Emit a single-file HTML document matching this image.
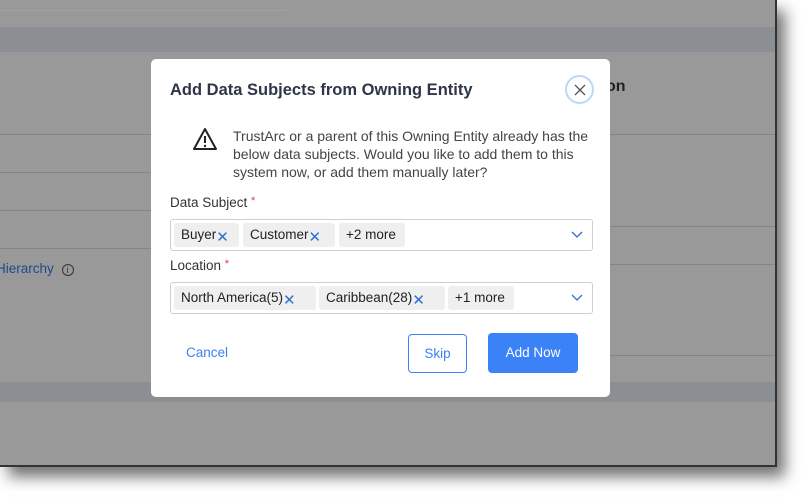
<!DOCTYPE html>
<html><head><style>
*{box-sizing:border-box;margin:0;padding:0}
body{width:809px;height:500px;background:#fff;position:relative;overflow:hidden;font-family:"Liberation Sans",sans-serif}
.win{position:absolute;left:0;top:0;width:777px;height:467px;background:#999;border-right:2px solid #333;border-bottom:2px solid #333;box-shadow:8px 10px 14px rgba(0,0,0,.55)}
.band{position:absolute;left:0;width:775px;background:#8b8e92}
.ln{position:absolute;height:1px;background:#7f858e}
.modal{position:absolute;left:151px;top:59px;width:459px;height:338px;background:#fff;border-radius:5px}
.t{position:absolute;white-space:nowrap}
.inp{position:absolute;left:19px;width:423px;height:32px;border:1px solid #cfcfcf;border-radius:3px}
.chip{position:absolute;top:3px;height:24px;background:#efefef;border-radius:3px;font-size:13.5px;color:#222;line-height:24px;padding-left:7px;white-space:nowrap}
.x{color:#2f6fd6;font-size:15px;position:relative;top:3px}
.lab{font-size:13.5px;color:#333}
.req{color:#e0374a;font-size:11px;vertical-align:top}
</style></head><body>
<div class="win">
<div class="band" style="top:27px;height:25px"></div>
<div class="ln" style="top:10px;left:0;width:287px;background:#a3a3a3"></div>
<div class="ln" style="top:134px;left:0;width:775px"></div>
<div class="ln" style="top:172px;left:0;width:160px"></div>
<div class="ln" style="top:210px;left:0;width:160px"></div>
<div class="ln" style="top:248px;left:0;width:160px"></div>
<div class="ln" style="top:226px;left:600px;width:175px"></div>
<div class="ln" style="top:264px;left:600px;width:175px"></div>
<div class="ln" style="top:355px;left:600px;width:175px"></div>
<div class="band" style="top:382px;height:20px"></div>
<div class="t" style="left:-4px;top:261px;font-size:13.5px;color:#1f4a8a">Hierarchy <span style="display:inline-block;width:12px;height:12px;border:1px solid #333;border-radius:50%;font-size:9px;text-align:center;line-height:10px;color:#333;margin-left:4px">i</span></div>
<div class="t" style="left:606px;top:78px;font-size:16px;font-weight:bold;color:#222">on</div>
</div>
<div class="modal">
<div class="t" style="left:19px;top:22px;font-size:16.5px;font-weight:bold;color:#2d3748">Add Data Subjects from Owning Entity</div>
<div style="position:absolute;left:414px;top:16px;width:29px;height:29px;border:2px solid #bcd8f7;border-radius:50%"></div>
<svg style="position:absolute;left:422px;top:24px" width="14" height="14"><path d="M2 2L12 12M12 2L2 12" stroke="#555" stroke-width="1.3"/></svg>
<svg style="position:absolute;left:41px;top:68px" width="26" height="25"><path d="M13 2L24 22H2Z" fill="none" stroke="#222" stroke-width="2" stroke-linejoin="round"/><path d="M13 9V16" stroke="#222" stroke-width="2"/><circle cx="13" cy="19" r="1.2" fill="#222"/></svg>
<div class="t" style="left:82px;top:68px;font-size:14px;color:#444;line-height:18px">TrustArc or a parent of this Owning Entity already has the<br>below data subjects. Would you like to add them to this<br>system now, or add them manually later?</div>
<div class="t lab" style="left:19px;top:136px">Data Subject <span class="req">*</span></div>
<div class="inp" style="top:160px">
<div class="chip" style="left:3px;width:65px">Buyer<span class="x">✕</span></div>
<div class="chip" style="left:72px;width:92px">Customer<span class="x">✕</span></div>
<div class="chip" style="left:168px;width:66px">+2 more</div>
<svg style="position:absolute;right:9px;top:11px" width="12" height="8"><path d="M1 1L6 6L11 1" fill="none" stroke="#2f6fd6" stroke-width="1.3"/></svg>
</div>
<div class="t lab" style="left:19px;top:199px">Location <span class="req">*</span></div>
<div class="inp" style="top:223px">
<div class="chip" style="left:3px;width:142px">North America(5)<span class="x">✕</span></div>
<div class="chip" style="left:148px;width:126px">Caribbean(28)<span class="x">✕</span></div>
<div class="chip" style="left:277px;width:66px">+1 more</div>
<svg style="position:absolute;right:9px;top:11px" width="12" height="8"><path d="M1 1L6 6L11 1" fill="none" stroke="#2f6fd6" stroke-width="1.3"/></svg>
</div>
<div class="t" style="left:35px;top:286px;font-size:13.5px;color:#3b82f6">Cancel</div>
<div style="position:absolute;left:257px;top:275px;width:59px;height:39px;border:1px solid #3b82f6;border-radius:4px;font-size:13.5px;color:#3b82f6;text-align:center;line-height:38px">Skip</div>
<div style="position:absolute;left:337px;top:274px;width:90px;height:40px;background:#3b82f6;border-radius:4px;font-size:13.5px;color:#fff;text-align:center;line-height:39px">Add Now</div>
</div>
</body></html>
